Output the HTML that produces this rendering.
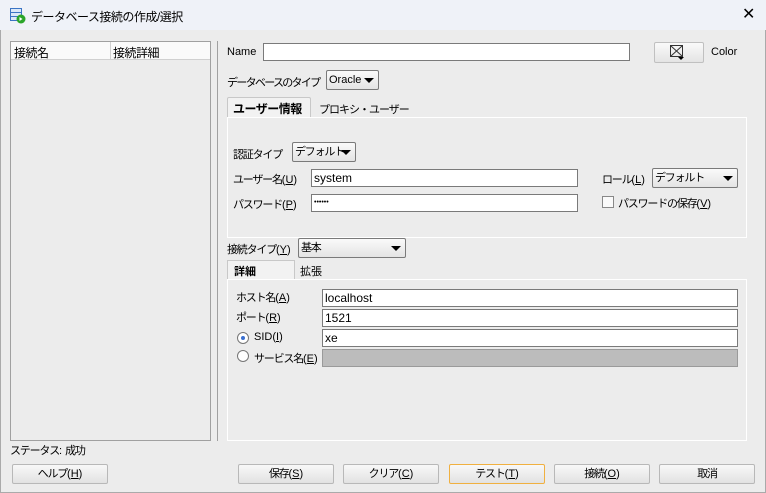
<!DOCTYPE html>
<html><head><meta charset="utf-8"><style>
*{box-sizing:border-box;margin:0;padding:0}
body{width:766px;height:493px;background:#ececec;font-family:"Liberation Sans","Noto Sans CJK JP",sans-serif;font-size:12px;color:#000;position:relative;overflow:hidden}
.a{position:absolute;white-space:nowrap}
.j{font-size:11px;letter-spacing:-1.2px}
.l{letter-spacing:0;font-size:11px}
.inp{position:absolute;background:#fff;border:1px solid #7a7a7a;height:18px;padding-left:2px;line-height:16px;font-size:12px}
.sel{position:absolute;border:1px solid #7a7a7a;border-radius:2px;background:linear-gradient(#fafafa,#e4e4e4);height:20px;line-height:18px;padding-left:2px;white-space:nowrap;overflow:hidden}
.sel:after{content:"";position:absolute;right:4px;top:7px;border-left:5px solid transparent;border-right:5px solid transparent;border-top:5px solid #000}
.btn{position:absolute;top:464px;height:20px;width:96px;border:1px solid #b8b8b8;border-radius:2px;background:linear-gradient(#f8f8f8,#e2e2e2);text-align:center;line-height:18px;font-size:11px;letter-spacing:-1.2px}
.radio{position:absolute;width:12px;height:12px;border:1px solid #777;border-radius:50%;background:#fff}
</style></head><body>
<div class="a" style="left:0;top:0;width:766px;height:30px;background:#eff2f8"></div>
<svg class="a" style="left:10px;top:8px" width="16" height="16"><rect x="0.5" y="0.5" width="11" height="12" fill="#dbe8f8" stroke="#3a74c4"/><line x1="0" y1="4.5" x2="12" y2="4.5" stroke="#3a74c4"/><line x1="0" y1="8.5" x2="12" y2="8.5" stroke="#3a74c4"/><circle cx="11" cy="11" r="4.5" fill="#2aa52a"/><path d="M9.5 9l3 2-3 2z" fill="#fff"/></svg>
<div class="a" style="left:31px;top:8px;font-size:12px;letter-spacing:-0.5px">データベース接続の作成/選択</div>
<div class="a" style="left:742px;top:4px;font-size:16px">✕</div>
<div class="a" style="left:0;top:30px;width:766px;height:463px;border-left:1px solid #aaa;border-right:1px solid #aaa;border-bottom:1px solid #aaa"></div>

<div class="a" style="left:10px;top:41px;width:201px;height:400px;border:1px solid #a0a0a0;background:#ececec"></div>
<div class="a" style="left:11px;top:42px;width:199px;height:18px;background:#fafafa;border-bottom:1px solid #d0d0d0"></div>
<div class="a" style="left:110px;top:42px;width:1px;height:18px;background:#d0d0d0"></div>
<div class="a" style="left:14px;top:44px;letter-spacing:-0.5px">接続名</div>
<div class="a" style="left:113px;top:44px;letter-spacing:-0.5px">接続詳細</div>
<div class="a" style="left:217px;top:41px;width:1px;height:400px;background:#a0a0a0"></div>

<div class="a" style="left:227px;top:46px;font-size:11px">Name</div>
<div class="inp" style="left:263px;top:43px;width:367px"></div>
<div class="a" style="left:654px;top:42px;width:50px;height:21px;border:1px solid #c0c0c0;border-radius:2px;background:linear-gradient(#fafafa,#e4e4e4)"></div>
<svg class="a" style="left:670px;top:45px" width="16" height="16"><rect x="0.5" y="0.5" width="12" height="11" fill="none" stroke="#333"/><path d="M1 1l11 10M12 1L1 11" stroke="#333"/><path d="M8 12h6l-3 3z" fill="#000"/></svg>
<div class="a" style="left:711px;top:46px;font-size:11px">Color</div>

<div class="a j" style="left:227px;top:74px;letter-spacing:-1.7px">データベースのタイプ</div>
<div class="sel" style="left:326px;top:70px;width:53px;font-size:11px">Oracle</div>

<div class="a" style="left:227px;top:97px;width:84px;height:21px;border:1px solid #c8c8c8;border-bottom:none;background:#f2f2f2;border-radius:2px 2px 0 0"></div>
<div class="a" style="left:233px;top:100px;font-weight:bold;font-size:12px;letter-spacing:-0.5px">ユーザー情報</div>
<div class="a j" style="left:319px;top:101px;letter-spacing:-1px">プロキシ・ユーザー</div>
<div class="a" style="left:227px;top:117px;width:520px;height:121px;border:1px solid #fff"></div>

<div class="a j" style="left:233px;top:146px">認証タイプ</div>
<div class="sel j" style="left:292px;top:142px;width:64px">デフォルト</div>
<div class="a j" style="left:233px;top:171px">ユーザー名<span class="l">(<u>U</u>)</span></div>
<div class="inp" style="left:311px;top:169px;width:267px">system</div>
<div class="a j" style="left:233px;top:196px">パスワード<span class="l">(<u>P</u>)</span></div>
<div class="inp" style="left:311px;top:194px;width:267px;font-size:7px">••••••</div>
<div class="a j" style="left:602px;top:171px">ロール<span class="l">(<u>L</u>)</span></div>
<div class="sel j" style="left:652px;top:168px;width:86px">デフォルト</div>
<div class="a" style="left:602px;top:196px;width:12px;height:12px;border:1px solid #888;background:#fafafa"></div>
<div class="a j" style="left:618px;top:195px">パスワードの保存<span class="l">(<u>V</u>)</span></div>

<div class="a j" style="left:227px;top:241px">接続タイプ<span class="l">(<u>Y</u>)</span></div>
<div class="sel j" style="left:298px;top:238px;width:108px">基本</div>
<div class="a" style="left:227px;top:260px;width:68px;height:20px;border:1px solid #c8c8c8;border-bottom:none;background:#f2f2f2"></div>
<div class="a" style="left:234px;top:263px;font-weight:bold;font-size:11px">詳細</div>
<div class="a" style="left:300px;top:263px;font-size:11px">拡張</div>
<div class="a" style="left:227px;top:279px;width:520px;height:162px;border:1px solid #fff"></div>

<div class="a j" style="left:236px;top:289px">ホスト名<span class="l">(<u>A</u>)</span></div>
<div class="inp" style="left:322px;top:289px;width:416px">localhost</div>
<div class="a j" style="left:236px;top:309px">ポート<span class="l">(<u>R</u>)</span></div>
<div class="inp" style="left:322px;top:309px;width:416px">1521</div>
<div class="radio" style="left:237px;top:332px"></div>
<div class="a" style="left:241px;top:336px;width:4px;height:4px;border-radius:50%;background:#3a6fd0"></div>
<div class="a l" style="left:254px;top:331px">SID(<u>I</u>)</div>
<div class="inp" style="left:322px;top:329px;width:416px">xe</div>
<div class="radio" style="left:237px;top:350px"></div>
<div class="a j" style="left:254px;top:350px">サービス名<span class="l">(<u>E</u>)</span></div>
<div class="inp" style="left:322px;top:349px;width:416px;background:#bcbcbc;border-color:#9a9a9a"></div>

<div class="a j" style="left:10px;top:442px">ステータス<span class="l">: </span>成功</div>
<div class="btn" style="left:12px">ヘルプ<span class="l">(<u>H</u>)</span></div>
<div class="btn" style="left:238px">保存<span class="l">(<u>S</u>)</span></div>
<div class="btn" style="left:343px">クリア<span class="l">(<u>C</u>)</span></div>
<div class="btn" style="left:449px;border-color:#f0b040">テスト<span class="l">(<u>T</u>)</span></div>
<div class="btn" style="left:554px">接続<span class="l">(<u>O</u>)</span></div>
<div class="btn" style="left:659px">取消</div>
</body></html>
